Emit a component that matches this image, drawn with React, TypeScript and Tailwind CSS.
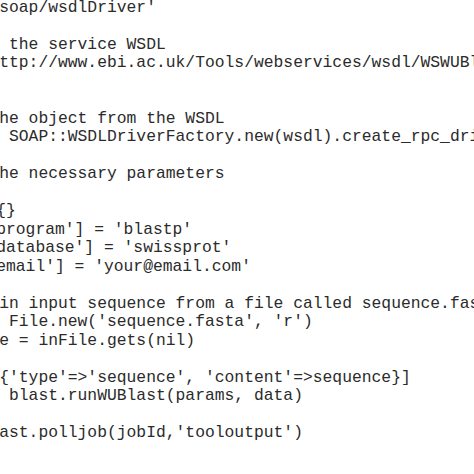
const lines: {text: string; nudge?: boolean}[] = [
  {text: "require 'soap/wsdlDriver'"},
  {text: ""},
  {text: "# Request the service WSDL"},
  {text: "wsdl = 'http://www.ebi.ac.uk/Tools/webservices/wsdl/WSWUBlast.wsdl'"},
  {text: ""},
  {text: ""},
  {text: "# Build the object from the WSDL"},
  {text: "blast   = SOAP::WSDLDriverFactory.new(wsdl).create_rpc_driver"},
  {text: ""},
  {text: "# Setup the necessary parameters"},
  {text: ""},
  {text: "params = {}", nudge: true},
  {text: "params ['program'] = 'blastp'", nudge: true},
  {text: "params ['database'] = 'swissprot'", nudge: true},
  {text: "params ['email'] = 'your@email.com'", nudge: true},
  {text: ""},
  {text: "# Taking in input sequence from a file called sequence.fasta"},
  {text: "inFile  = File.new('sequence.fasta', 'r')"},
  {text: "inSequence = inFile.gets(nil)"},
  {text: ""},
  {text: "data  = [{'type'=>'sequence', 'content'=>sequence}]"},
  {text: "jobId   = blast.runWUBlast(params, data)"},
  {text: ""},
  {text: "text = blast.polljob(jobId,'tooloutput')"},
];

export default function App() {
  return (
    <div className="h-[474px] w-[474px] overflow-hidden bg-white">
      <div className="-mt-[1.5px] -ml-[89px] font-['Liberation_Mono',monospace] text-[16.33px] leading-[18.5px] text-[#2b2b2b]">
        {lines.map((line, i) => (
          <div
            key={i}
            className={
              line.nudge
                ? "-ml-[3px] h-[18.5px] whitespace-pre"
                : "h-[18.5px] whitespace-pre"
            }
          >
            {line.text}
          </div>
        ))}
      </div>
    </div>
  );
}
